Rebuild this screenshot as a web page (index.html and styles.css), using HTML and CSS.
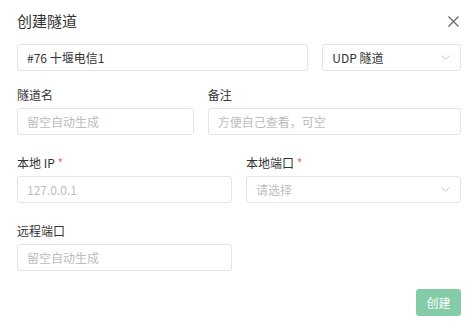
FILE: index.html
```html
<!DOCTYPE html>
<html lang="zh-CN">
<head>
  <meta charset="UTF-8" />
  <meta name="viewport" content="width=device-width, initial-scale=1.0"/>
  <title>创建隧道</title>
  <link rel="stylesheet" href="styles.css">
</head>
<body>
  <div class="dialog">
    <div class="dialog-header">
      <h2>创建隧道</h2>
      <button class="close-btn" type="button" aria-label="关闭">
        <svg width="11" height="11" viewBox="0 0 11 11">
          <path d="M0.5 0.5 L10.5 10.5 M10.5 0.5 L0.5 10.5" stroke="#666" stroke-width="1.2" fill="none"/>
        </svg>
      </button>
    </div>

    <form class="dialog-body" id="tunnel-form">
      <div class="row row-first">
        <div class="span-16">
          <input class="field" type="text" value="#76 十堰电信1" />
        </div>
        <div class="span-8">
          <div class="select">
            <span>UDP 隧道</span>
            <svg class="chevron" width="9" height="5" viewBox="0 0 9 5">
              <path d="M0.5 0.5 L4.5 4.5 L8.5 0.5" stroke="#c4c4c4" stroke-width="1" fill="none"/>
            </svg>
          </div>
        </div>
      </div>

      <div class="row">
        <div class="span-10 form-item">
          <label for="name">隧道名</label>
          <input class="field" id="name" type="text" placeholder="留空自动生成" />
        </div>
        <div class="span-14 form-item">
          <label for="remark">备注</label>
          <input class="field" id="remark" type="text" placeholder="方便自己查看，可空" />
        </div>
      </div>

      <div class="row">
        <div class="span-12 form-item">
          <label for="local-ip">本地 IP <span class="required">*</span></label>
          <input class="field" id="local-ip" type="text" placeholder="127.0.0.1" />
        </div>
        <div class="span-12 form-item">
          <label>本地端口 <span class="required">*</span></label>
          <div class="select">
            <span class="placeholder">请选择</span>
            <svg class="chevron" width="9" height="5" viewBox="0 0 9 5">
              <path d="M0.5 0.5 L4.5 4.5 L8.5 0.5" stroke="#c4c4c4" stroke-width="1" fill="none"/>
            </svg>
          </div>
        </div>
      </div>

      <div class="row row-last">
        <div class="span-12 form-item">
          <label for="remote-port">远程端口</label>
          <input class="field" id="remote-port" type="text" placeholder="留空自动生成" />
        </div>
      </div>

      <div class="dialog-footer">
        <button type="submit" class="submit-btn" disabled>创建</button>
      </div>
    </form>
  </div>
</body>
</html>
```

FILE: styles.css
```css
body {
  margin: 0;
  font-family: "Noto Sans CJK SC", "Noto Sans", sans-serif;
  background-color: #fff;
  color: #333;
}

.dialog {
  width: 474px;
  box-sizing: border-box;
  padding: 10px 13px 0 17px;
}

.dialog-header {
  display: flex;
  justify-content: space-between;
  align-items: center;
  height: 22px;
}

.dialog-header h2 {
  margin: 0;
  font-size: 15px;
  font-weight: normal;
  line-height: 22px;
  color: #333;
}

.close-btn {
  border: none;
  background: none;
  padding: 0;
  margin-right: 2px;
  width: 11px;
  height: 11px;
  display: flex;
  cursor: pointer;
}

.dialog-body {
  padding-top: 12px;
}

.row {
  display: grid;
  grid-template-columns: repeat(24, 1fr);
  column-gap: 14px;
  margin-bottom: 19px;
}

.row-first {
  margin-bottom: 15px;
}

.row-last {
  margin-bottom: 18px;
}

.span-8 { grid-column: span 8; }
.span-10 { grid-column: span 10; }
.span-12 { grid-column: span 12; }
.span-14 { grid-column: span 14; }
.span-16 { grid-column: span 16; }

.form-item label {
  display: block;
  font-size: 12px;
  line-height: 18px;
  margin-bottom: 4px;
  color: #333;
}

.required {
  color: #f56c6c;
}

.field,
.select {
  display: flex;
  align-items: center;
  width: 100%;
  height: 27px;
  box-sizing: border-box;
  border: 1px solid #e4e4e4;
  border-radius: 3px;
  padding: 0 9px;
  font-family: inherit;
  font-size: 12px;
  color: #333;
  background-color: #fff;
  outline: none;
}

.field::placeholder {
  color: #bdbdbd;
}

.select {
  justify-content: space-between;
}

.select .placeholder {
  color: #bdbdbd;
}

.chevron {
  margin-right: 1px;
}

.dialog-footer {
  display: flex;
  justify-content: flex-end;
}

.submit-btn {
  width: 45px;
  height: 27px;
  border: none;
  border-radius: 3px;
  background-color: #84cba8;
  color: #fff;
  font-family: inherit;
  font-size: 12px;
  padding: 0;
  cursor: not-allowed;
}
```
